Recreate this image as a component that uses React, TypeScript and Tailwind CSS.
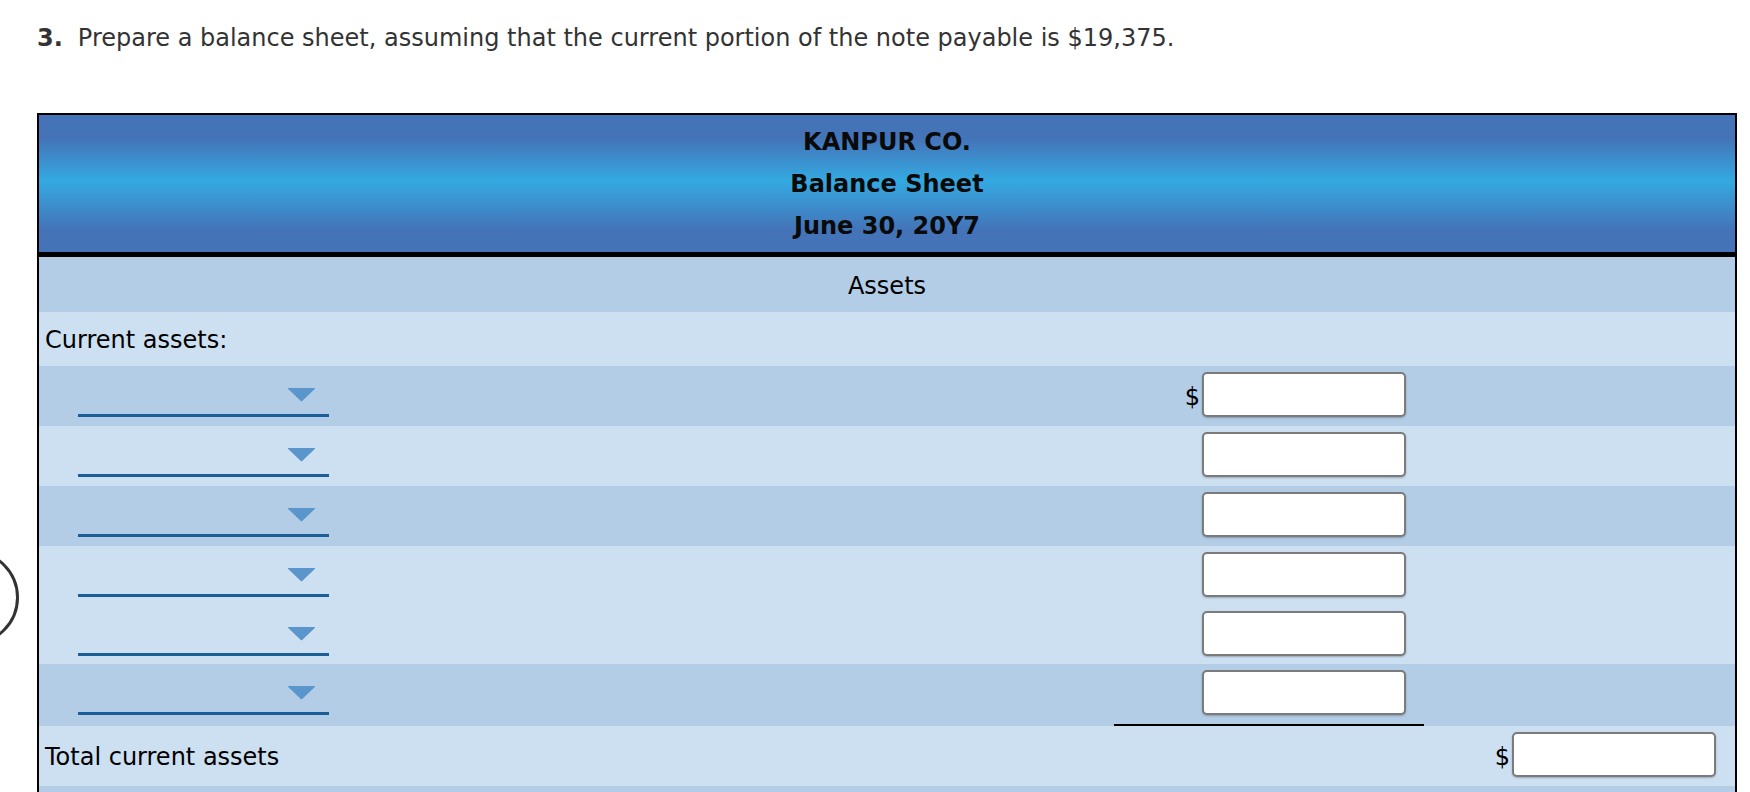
import React from "react";

const ROW_DARK = "bg-[#b3cde6]";
const ROW_LIGHT = "bg-[#cde0f1]";

function Caret() {
  return (
    <svg width="29" height="15" viewBox="0 0 29 15" className="block">
      <path d="M1.5 1 L27.5 1 Q28.5 1 27.8 2 L15.2 14 Q14.5 14.7 13.8 14 L1.2 2 Q0.5 1 1.5 1 Z" fill="#5a96cb" />
    </svg>
  );
}

function Dropdown() {
  return (
    <div className="ml-[39px] w-[251px] pt-[21px]">
      <div className="flex justify-end pr-[13px]">
        <Caret />
      </div>
      <div className="mt-[12px] h-[3px] bg-[#1b5e98]" />
    </div>
  );
}

function AmountBox() {
  return (
    <div className="w-[204px] h-[45px] rounded-[5px] border-2 border-[#7b7b7b] bg-white shadow-[0_1px_2px_rgba(0,0,0,0.25)]" />
  );
}

function Dollar() {
  return <span className="mr-[2px] mb-[8px] text-[24px] leading-none">$</span>;
}

interface EntryRowProps {
  bg: string;
  dollar?: boolean;
  rule?: boolean;
  h: string;
}

function EntryRow({ bg, dollar, rule, h }: EntryRowProps) {
  return (
    <div className={`grid grid-cols-[1075px_310px_1fr] ${bg} ${h}`}>
      <div>
        <Dropdown />
      </div>
      <div className={`flex justify-end items-start pr-[18px] pt-[6px] ${rule ? "border-b-2 border-black" : ""}`}>
        <div className="flex items-end">
          {dollar && <Dollar />}
          <AmountBox />
        </div>
      </div>
      <div />
    </div>
  );
}

export default function App() {
  return (
    <div className="relative min-h-screen overflow-hidden bg-white font-['DejaVu_Sans',Verdana,sans-serif] text-black">
      {/* partial ring at the left edge */}
      <div className="absolute left-[-76px] top-[550px] h-[95px] w-[95px] rounded-full border-[3px] border-[#333]" />

      <div className="pl-[37px] pt-[24px]">
        <p className="text-[24px] leading-[28px] text-[#333]">
          <strong className="mr-[15px] font-bold">3.</strong>
          Prepare a balance sheet, assuming that the current portion of the note payable is $19,375.
        </p>

        <div className="mt-[61px] w-[1700px] border-2 border-b-0 border-black">
          {/* header */}
          <div className="border-b-[5px] border-black bg-[linear-gradient(to_bottom,#4473b8_0%,#4473b8_17%,#34a9e1_48%,#4473b8_84%,#4473b8_100%)] pt-[6px] pb-[5px] text-center text-[24px] font-bold leading-[42px] text-[#0a0a0a]">
            <div>KANPUR CO.</div>
            <div>Balance Sheet</div>
            <div>June 30, 20Y7</div>
          </div>

          <div className={`${ROW_DARK} flex h-[55px] items-center justify-center pt-[2px] text-[24px]`}>Assets</div>
          <div className={`${ROW_LIGHT} flex h-[54px] items-center pl-[6px] pt-[2px] text-[24px]`}>Current assets:</div>

          <EntryRow bg={ROW_DARK} h="h-[60px]" dollar />
          <EntryRow bg={ROW_LIGHT} h="h-[60px]" />
          <EntryRow bg={ROW_DARK} h="h-[60px]" />
          <EntryRow bg={ROW_LIGHT} h="h-[59px]" />
          <EntryRow bg={ROW_LIGHT} h="h-[59px]" />
          <EntryRow bg={ROW_DARK} h="h-[62px]" rule />

          <div className={`grid grid-cols-[1075px_310px_1fr] ${ROW_LIGHT} h-[60px]`}>
            <div className="flex items-center pl-[6px] pt-[2px] text-[24px]">Total current assets</div>
            <div />
            <div className="flex justify-end items-start pr-[19px] pt-[6px]">
              <div className="flex items-end">
                <Dollar />
                <AmountBox />
              </div>
            </div>
          </div>

          <div className={`${ROW_DARK} h-[40px]`} />
        </div>
      </div>
    </div>
  );
}
